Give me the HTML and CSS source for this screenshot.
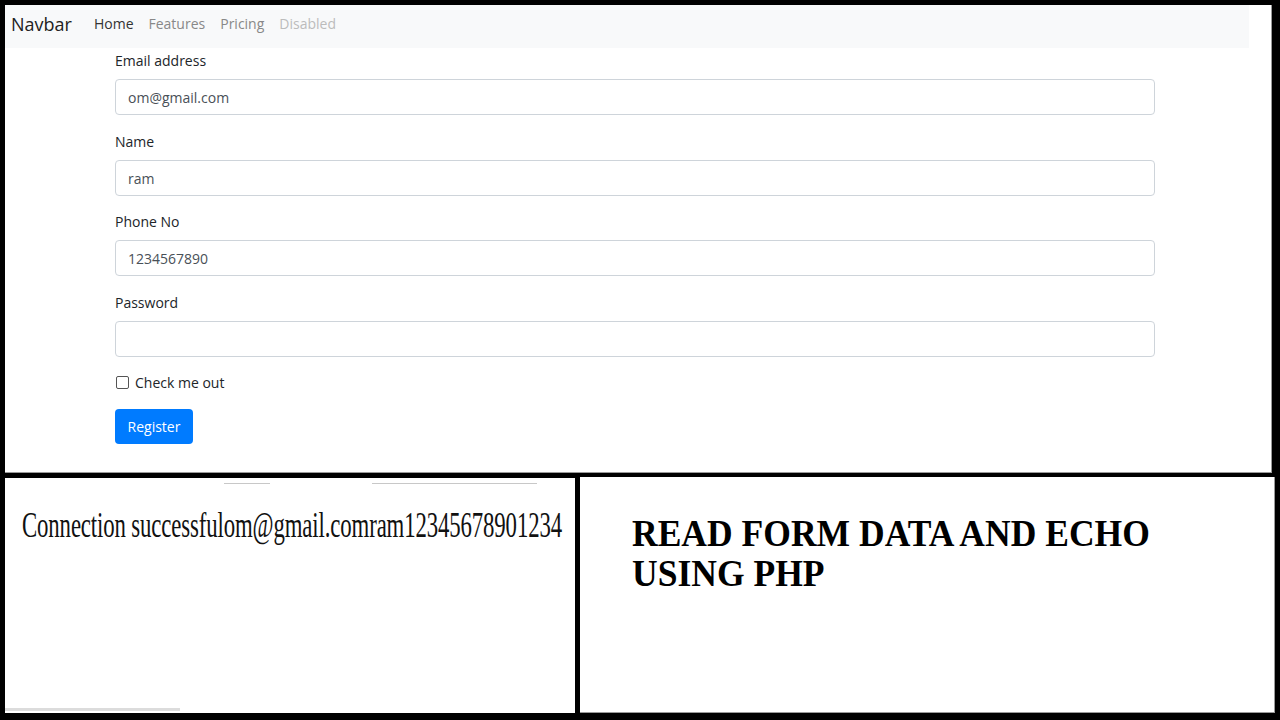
FILE: index.html
```html
<!DOCTYPE html>
<html>
<head>
<meta charset="utf-8">
<link rel="stylesheet" href="styles.css">
</head>
<body>
<div class="screen">
  <section class="top">
    <nav class="navbar">
      <span class="brand">Navbar</span>
      <a class="nav-link active">Home</a>
      <a class="nav-link">Features</a>
      <a class="nav-link">Pricing</a>
      <a class="nav-link disabled">Disabled</a>
    </nav>
    <form class="form">
      <div class="group">
        <label class="label">Email address</label>
        <div class="input">om@gmail.com</div>
      </div>
      <div class="group">
        <label class="label">Name</label>
        <div class="input">ram</div>
      </div>
      <div class="group">
        <label class="label">Phone No</label>
        <div class="input">1234567890</div>
      </div>
      <div class="group">
        <label class="label">Password</label>
        <div class="input"></div>
      </div>
      <div class="check">
        <span class="box"></span>
        <span class="check-label">Check me out</span>
      </div>
      <div class="btn">Register</div>
    </form>
  </section>
  <div class="bottom">
    <section class="left">
      <div class="lines">
        <span class="line l1"></span>
        <span class="line l2"></span>
      </div>
      <div class="echo"><span class="echo-text">Connection successfulom@gmail.comram12345678901234</span></div>
      <div class="scroll"></div>
    </section>
    <section class="right">
      <h1 class="title">READ FORM DATA AND ECHO<br>USING PHP</h1>
    </section>
  </div>
</div>
</body>
</html>
```
FILE: styles.css
```css
html, body {
  margin: 0;
  padding: 0;
  background: #000;
}
.screen {
  width: 1280px;
  height: 720px;
  display: flex;
  flex-direction: column;
  padding-top: 5px;
  box-sizing: border-box;
}
.top {
  margin-left: 5px;
  width: 1267px;
  height: 468px;
  background: #fff;
  border-right: 1px solid #9a9a9a;
  border-bottom: 1px solid #9a9a9a;
  box-sizing: border-box;
  font-family: "Open Sans", "Noto Sans", sans-serif;
}
.navbar {
  width: 1244px;
  height: 43px;
  background: #f8f9fa;
  display: flex;
  align-items: center;
  padding-left: 6px;
  padding-bottom: 6px;
  box-sizing: border-box;
}
.brand {
  font-size: 18px;
  color: #222;
  margin-right: 22px;
}
.nav-link {
  font-size: 14px;
  color: #888;
  margin-right: 15px;
}
.nav-link.active { color: #333; }
.nav-link.disabled { color: #bcbcbc; }
.form {
  margin-left: 110px;
  width: 1040px;
  padding-top: 2px;
}
.group {
  margin-bottom: 16px;
}
.group:first-child + .group {
  margin-bottom: 15px;
}
.label {
  display: block;
  font-size: 14px;
  line-height: 22px;
  height: 22px;
  color: #212529;
  margin-bottom: 7px;
}
.input {
  height: 36px;
  border: 1px solid #ced4da;
  border-radius: 4px;
  box-sizing: border-box;
  padding-left: 12px;
  display: flex;
  align-items: center;
  font-size: 14px;
  color: #495057;
}
.check {
  display: flex;
  align-items: center;
  height: 22px;
  margin-top: -2px;
  margin-bottom: 16px;
}
.box {
  width: 11px;
  height: 11px;
  border: 1px solid #555;
  border-radius: 2px;
  margin-left: 1px;
  margin-right: 6px;
}
.check-label {
  font-size: 14px;
  color: #212529;
}
.btn {
  width: 78px;
  height: 35px;
  background: #007bff;
  border-radius: 4px;
  color: #fff;
  font-size: 14px;
  display: flex;
  align-items: center;
  justify-content: center;
}
.bottom {
  display: flex;
  margin-top: 4px;
  height: 236px;
}
.left {
  margin-left: 5px;
  width: 570px;
  height: 235px;
  margin-top: 1px;
  background: #fff;
  position: relative;
  display: flex;
  flex-direction: column;
}
.lines {
  height: 7px;
  position: relative;
}
.line {
  position: absolute;
  top: 5px;
  height: 1px;
  background: #c8c8c8;
}
.l1 { left: 219px; width: 46px; }
.l2 { left: 367px; width: 165px; }
.echo {
  margin-top: 20px;
  padding-left: 17px;
  height: 40px;
  white-space: nowrap;
}
.echo-text {
  display: inline-block;
  font-family: "Liberation Serif", "Times New Roman", serif;
  font-size: 36px;
  line-height: 40px;
  color: #111;
  transform: scaleX(0.633);
  transform-origin: left center;
  letter-spacing: -0.2px;
}
.scroll {
  position: absolute;
  left: 0;
  bottom: 2px;
  width: 175px;
  height: 3px;
  background: #dcdcdc;
}
.right {
  margin-left: 5px;
  width: 695px;
  height: 236px;
  background: #fff;
  border-right: 1px solid #9a9a9a;
  border-bottom: 1px solid #9a9a9a;
  box-sizing: border-box;
}
.title {
  margin: 36px 0 0 52px;
  font-family: "Liberation Serif", "Times New Roman", serif;
  font-weight: bold;
  font-size: 38px;
  line-height: 40px;
  color: #000;
  transform: scaleX(0.935);
  transform-origin: left top;
  white-space: nowrap;
}
```
